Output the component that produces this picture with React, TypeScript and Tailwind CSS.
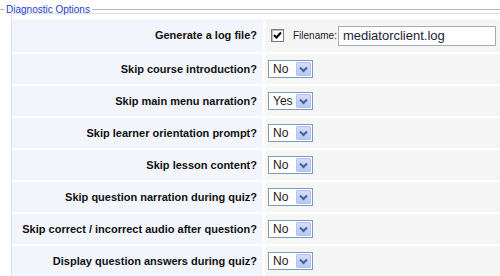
import React from 'react';

const rows: { label: string; value: string }[] = [
  { label: 'Skip course introduction?', value: 'No' },
  { label: 'Skip main menu narration?', value: 'Yes' },
  { label: 'Skip learner orientation prompt?', value: 'No' },
  { label: 'Skip lesson content?', value: 'No' },
  { label: 'Skip question narration during quiz?', value: 'No' },
  { label: 'Skip correct / incorrect audio after question?', value: 'No' },
  { label: 'Display question answers during quiz?', value: 'No' },
];

const SelectBox = ({ value }: { value: string }) => (
  <div className="flex h-[18px] w-[45px] items-center justify-between border border-[#7f9db9] bg-white pl-[4px] pr-[1px]">
    <span className="text-[12px] leading-none text-[#1a1a1a]">{value}</span>
    <div className="flex h-[14px] w-[15px] items-center justify-center rounded-[1px] border border-[#b3c5ee] bg-gradient-to-b from-[#d2defc] to-[#b4c8f6]">
      <svg width="9" height="7" viewBox="0 0 9 7">
        <path d="M1 1.5 L4.5 5 L8 1.5" fill="none" stroke="#4d6185" strokeWidth="2" />
      </svg>
    </div>
  </div>
);

const Row = ({ label, tall, children }: { label: string; tall?: boolean; children: React.ReactNode }) => (
  <div className={`flex gap-[2px] ${tall ? 'h-[33px]' : 'h-[30px]'}`}>
    <div className="flex w-[251px] shrink-0 items-center justify-end bg-[#f2f5fc] pr-[6px] text-[11px] font-bold text-[#111]">
      {label}
    </div>
    <div className="flex flex-1 items-center bg-[#f5f5f5] pl-[3px]">{children}</div>
  </div>
);

export default function App() {
  return (
    <div
      className="h-[276px] w-[500px] overflow-hidden bg-white"
      style={{ fontFamily: '"Liberation Sans", Arial, sans-serif' }}
    >
      <div className="flex h-[13px] items-start">
        <div className="mt-[9px] w-[4px] border-t border-[#b8b8b8]" />
        <span className="relative z-10 mt-[3px] px-[2px] text-[10px] leading-[13px] text-[#1c3dc8]">
          Diagnostic Options
        </span>
        <div className="mt-[9px] flex-1 border-t border-[#b8b8b8]" />
      </div>
      <div className="ml-[11px] flex flex-col gap-[2px] border-l border-t border-[#d6dff3] pt-[5px]">
        <Row label="Generate a log file?" tall>
          <div className="ml-[3px] flex h-[13px] w-[13px] items-center justify-center border border-[#7a7a7a] bg-white shadow-[inset_1px_1px_0_#c0c0c0]">
            <svg width="9" height="9" viewBox="0 0 9 9">
              <path d="M1 4 L3.5 6.5 L8 1.5" fill="none" stroke="#000" strokeWidth="2" />
            </svg>
          </div>
          <span className="ml-[9px] text-[10px] text-[#222]">Filename:</span>
          <div className="ml-[1px] flex h-[20px] w-[158px] items-center border border-[#a5acb2] bg-white pl-[4px] text-[13px] text-[#1d1d3a]">
            mediatorclient.log
          </div>
        </Row>
        {rows.map((r) => (
          <Row key={r.label} label={r.label}>
            <SelectBox value={r.value} />
          </Row>
        ))}
      </div>
    </div>
  );
}
